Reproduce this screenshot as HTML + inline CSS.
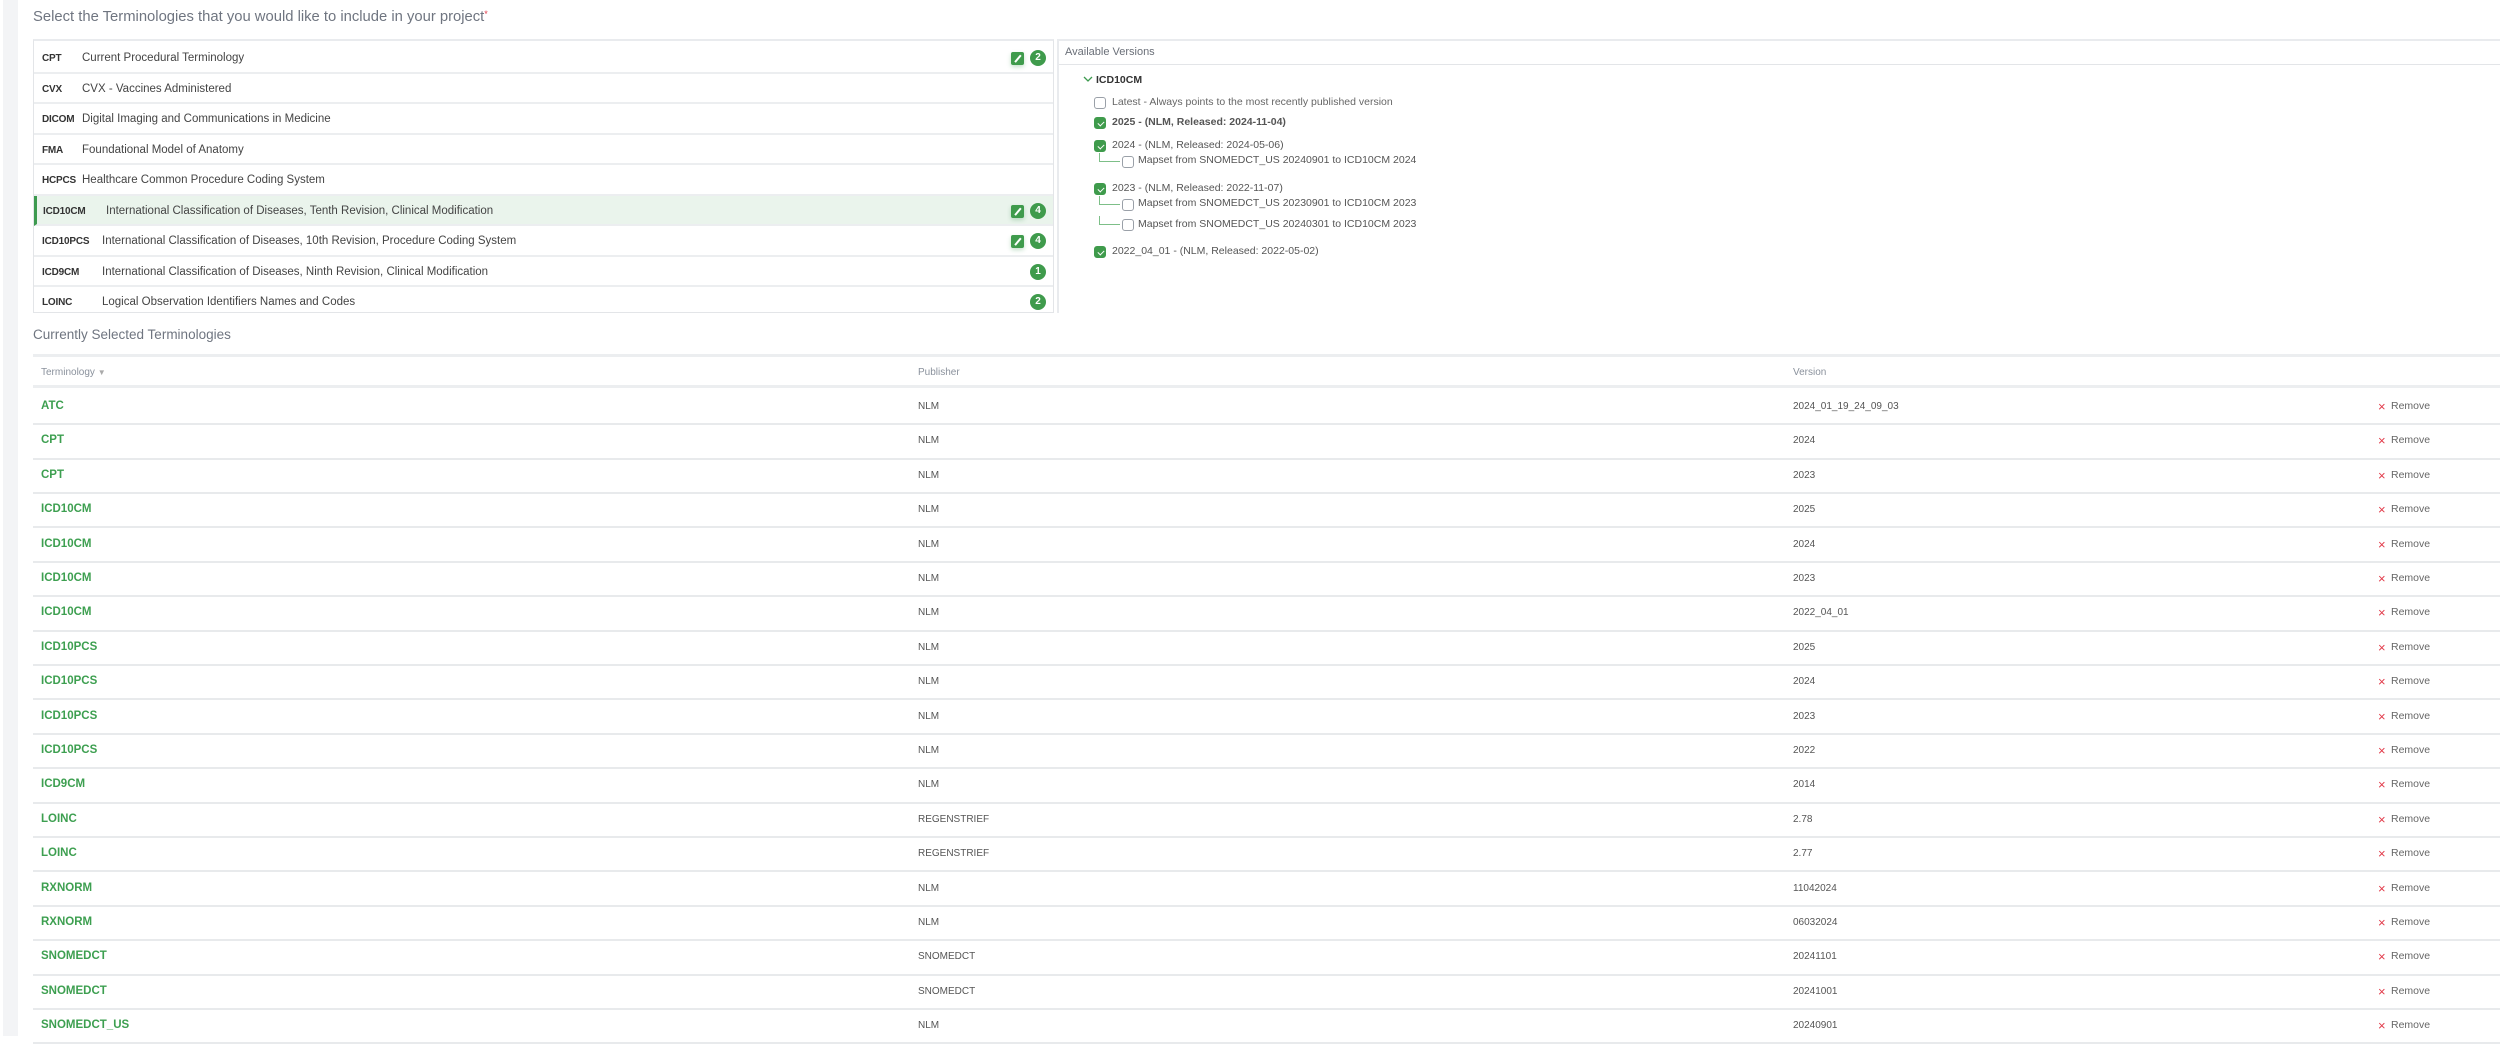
<!DOCTYPE html>
<html><head><meta charset="utf-8"><style>
*{margin:0;padding:0;box-sizing:border-box}
body{width:2500px;height:1036px;overflow:hidden;background:#fff;font-family:"Liberation Sans",sans-serif;position:relative;color:#4a4f57}
.a{position:absolute;white-space:nowrap}
.strip{left:0;top:0;width:18px;height:1036px;background:#f3f4f6;border-left:3px solid #fff}
.title{left:33px;top:9px;font-size:14.8px;color:#6f7580}
.lbox{left:33px;top:39px;width:1021px;height:274px;border:1px solid #e3e5e8;border-top:2px solid #e9ebee}
.row{position:absolute;left:0;width:1019px;height:30.5px;border-bottom:2px solid #eceef0}
.row .c{position:absolute;left:8px;top:10px;font-size:10px;font-weight:bold;color:#333;letter-spacing:-0.2px}
.row .d{position:absolute;top:9px;font-size:11.5px;color:#444}
.sel{background:#eaf4ec;border-left:3px solid #3d9a4f}
.ed{position:absolute;width:13px;height:13px;border-radius:2px;background:#3f9b4c;top:9px;left:977px;box-shadow:0 2px 4px rgba(60,150,80,.3)}
.ed:after{content:"";position:absolute;left:6px;top:2px;width:1.5px;height:9px;background:#fff;transform:rotate(40deg)}
.bd{position:absolute;width:16px;height:16px;border-radius:50%;background:#3f9b4c;color:#fff;font-size:10px;font-weight:bold;text-align:center;line-height:16px;top:7px;left:996px}
.rp{left:1057px;top:39px;width:1443px;height:274px;border-left:2px solid #e9ebee;border-top:2px solid #e9ebee}
.rh{left:1065px;top:46px;font-size:11px;color:#6a6f78}
.rhl{left:1059px;top:64px;width:1441px;height:1px;background:#e3e5e8}
.t{font-size:10.5px;color:#555}
.cb{position:absolute;width:12px;height:12px;border:1px solid #9aa0a8;border-radius:3px;background:#fff}
.cbc{background:#3f9b4c;border-color:#3f9b4c}
.cbc:after{content:"";position:absolute;left:3.5px;top:2px;width:3px;height:5px;border:solid #fff;border-width:0 1.5px 1.5px 0;transform:rotate(45deg)}
.ln{position:absolute;border-left:1px solid #7dbf88;border-bottom:1px solid #7dbf88;width:21px;height:9px}
.sub{left:33px;top:327px;font-size:13.5px;color:#6f7580}
.th{left:33px;top:354px;width:2467px;height:34px;border-top:3px solid #eceef0;border-bottom:3px solid #eceef0}
.hd{font-size:10px;color:#8a919c;top:367px}
.tr{left:33px;width:2467px;height:34.4px;border-bottom:2px solid #e8eaec}
.g{font-size:11.5px;font-weight:bold;color:#3d9f50;left:41px}
.p{font-size:10px;color:#555}
.x{color:#e23b4a;font-size:13px;left:2378px}
.rm{font-size:10.5px;color:#666;left:2391px}
</style></head><body>
<div class="a strip"></div>
<div class="a title">Select the Terminologies that you would like to include in your project<span style="color:#e23b4a;font-size:9px;vertical-align:top">*</span></div>
<div class="a lbox">
<div class="row" style="top:2px"><span class="c">CPT</span><span class="d" style="left:48px">Current Procedural Terminology</span><i class="ed"></i><span class="bd">2</span></div>
<div class="row" style="top:32.5px"><span class="c">CVX</span><span class="d" style="left:48px">CVX - Vaccines Administered</span></div>
<div class="row" style="top:63px"><span class="c">DICOM</span><span class="d" style="left:48px">Digital Imaging and Communications in Medicine</span></div>
<div class="row" style="top:93.5px"><span class="c">FMA</span><span class="d" style="left:48px">Foundational Model of Anatomy</span></div>
<div class="row" style="top:124px"><span class="c">HCPCS</span><span class="d" style="left:48px">Healthcare Common Procedure Coding System</span></div>
<div class="row sel" style="top:154.5px"><span class="c" style="left:6px">ICD10CM</span><span class="d" style="left:69px">International Classification of Diseases, Tenth Revision, Clinical Modification</span><i class="ed" style="left:974px"></i><span class="bd" style="left:993px">4</span></div>
<div class="row" style="top:185px"><span class="c">ICD10PCS</span><span class="d" style="left:68px">International Classification of Diseases, 10th Revision, Procedure Coding System</span><i class="ed"></i><span class="bd">4</span></div>
<div class="row" style="top:215.5px"><span class="c">ICD9CM</span><span class="d" style="left:68px">International Classification of Diseases, Ninth Revision, Clinical Modification</span><span class="bd">1</span></div>
<div class="row" style="top:246px;border-bottom:none"><span class="c">LOINC</span><span class="d" style="left:68px">Logical Observation Identifiers Names and Codes</span><span class="bd">2</span></div>
</div>
<div class="a rp"></div>
<div class="a rh">Available Versions</div>
<div class="a rhl"></div>
<svg class="a" style="left:1083px;top:76px" width="10" height="7"><path d="M1 1 L5 5 L9 1" fill="none" stroke="#3d9a4f" stroke-width="1.3"/></svg>
<div class="a t" style="left:1096px;top:74px;font-weight:bold;color:#333">ICD10CM</div>
<i class="cb" style="left:1094px;top:97px"></i><div class="a t" style="left:1112px;top:96px;color:#666">Latest - Always points to the most recently published version</div>
<i class="cb cbc" style="left:1094px;top:117px"></i><div class="a t" style="left:1112px;top:116px;font-weight:bold;color:#555">2025 - (NLM, Released: 2024-11-04)</div>
<i class="cb cbc" style="left:1094px;top:140px"></i><div class="a t" style="left:1112px;top:139px">2024 - (NLM, Released: 2024-05-06)</div>
<i class="ln" style="left:1099px;top:153px"></i><i class="cb" style="left:1122px;top:156px"></i><div class="a t" style="left:1138px;top:154px">Mapset from SNOMEDCT_US 20240901 to ICD10CM 2024</div>
<i class="cb cbc" style="left:1094px;top:183px"></i><div class="a t" style="left:1112px;top:182px">2023 - (NLM, Released: 2022-11-07)</div>
<i class="ln" style="left:1099px;top:196px"></i><i class="cb" style="left:1122px;top:199px"></i><div class="a t" style="left:1138px;top:197px">Mapset from SNOMEDCT_US 20230901 to ICD10CM 2023</div>
<i class="ln" style="left:1099px;top:216px"></i><i class="cb" style="left:1122px;top:219px"></i><div class="a t" style="left:1138px;top:218px">Mapset from SNOMEDCT_US 20240301 to ICD10CM 2023</div>
<i class="cb cbc" style="left:1094px;top:246px"></i><div class="a t" style="left:1112px;top:245px">2022_04_01 - (NLM, Released: 2022-05-02)</div>

<div class="a sub">Currently Selected Terminologies</div>
<div class="a th"></div>
<div class="a hd" style="left:41px">Terminology <span style="font-size:8px;color:#aaa">&#9660;</span></div>
<div class="a hd" style="left:918px">Publisher</div>
<div class="a hd" style="left:1793px">Version</div>
<div id="rows"></div>
<script>
var d=[["ATC","NLM","2024_01_19_24_09_03"],["CPT","NLM","2024"],["CPT","NLM","2023"],["ICD10CM","NLM","2025"],["ICD10CM","NLM","2024"],["ICD10CM","NLM","2023"],["ICD10CM","NLM","2022_04_01"],["ICD10PCS","NLM","2025"],["ICD10PCS","NLM","2024"],["ICD10PCS","NLM","2023"],["ICD10PCS","NLM","2022"],["ICD9CM","NLM","2014"],["LOINC","REGENSTRIEF","2.78"],["LOINC","REGENSTRIEF","2.77"],["RXNORM","NLM","11042024"],["RXNORM","NLM","06032024"],["SNOMEDCT","SNOMEDCT","20241101"],["SNOMEDCT","SNOMEDCT","20241001"],["SNOMEDCT_US","NLM","20240901"]];
var h="";
for(var i=0;i<d.length;i++){var y=406+i*34.4;
h+='<div class="a tr" style="top:'+(y-17.2+2)+'px"></div>';
h+='<div class="a g" style="top:'+(y-6)+'px">'+d[i][0]+'</div>';
h+='<div class="a p" style="left:918px;top:'+(y-5)+'px">'+d[i][1]+'</div>';
h+='<div class="a p" style="left:1793px;top:'+(y-5)+'px">'+d[i][2]+'</div>';
h+='<div class="a x" style="top:'+(y-7)+'px">&#215;</div><div class="a rm" style="top:'+(y-6)+'px">Remove</div>';}
document.getElementById("rows").innerHTML=h;
</script>
</body></html>
